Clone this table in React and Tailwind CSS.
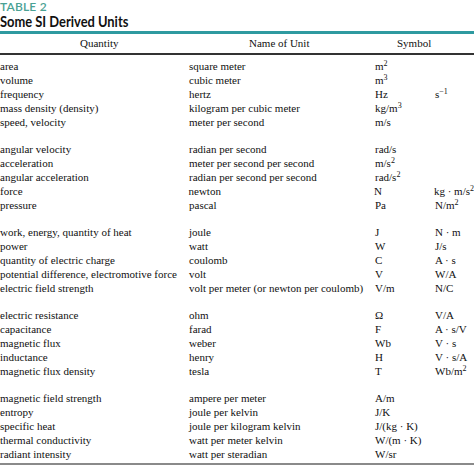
const groups = [
  [
    ["area", "square meter", <>m<sup>2</sup></>, ""],
    ["volume", "cubic meter", <>m<sup>3</sup></>, ""],
    ["frequency", "hertz", "Hz", <>s<sup>−1</sup></>],
    ["mass density (density)", "kilogram per cubic meter", <>kg/m<sup>3</sup></>, ""],
    ["speed, velocity", "meter per second", "m/s", ""],
  ],
  [
    ["angular velocity", "radian per second", "rad/s", ""],
    ["acceleration", "meter per second per second", <>m/s<sup>2</sup></>, ""],
    ["angular acceleration", "radian per second per second", <>rad/s<sup>2</sup></>, ""],
    ["force", "newton", "N", <>kg · m/s<sup>2</sup></>],
    ["pressure", "pascal", "Pa", <>N/m<sup>2</sup></>],
  ],
  [
    ["work, energy, quantity of heat", "joule", "J", "N · m"],
    ["power", "watt", "W", "J/s"],
    ["quantity of electric charge", "coulomb", "C", "A · s"],
    ["potential difference, electromotive force", "volt", "V", "W/A"],
    ["electric field strength", "volt per meter (or newton per coulomb)", "V/m", "N/C"],
  ],
  [
    ["electric resistance", "ohm", "Ω", "V/A"],
    ["capacitance", "farad", "F", "A · s/V"],
    ["magnetic flux", "weber", "Wb", "V · s"],
    ["inductance", "henry", "H", "V · s/A"],
    ["magnetic flux density", "tesla", "T", <>Wb/m<sup>2</sup></>],
  ],
  [
    ["magnetic field strength", "ampere per meter", "A/m", ""],
    ["entropy", "joule per kelvin", "J/K", ""],
    ["specific heat", "joule per kilogram kelvin", "J/(kg · K)", ""],
    ["thermal conductivity", "watt per meter kelvin", "W/(m · K)", ""],
    ["radiant intensity", "watt per steradian", "W/sr", ""],
  ],
];

const Row = ({ r }) => (
  <div className="flex h-[14px] items-center whitespace-nowrap">
    <div className="w-[189px]">{r[0]}</div>
    <div className="w-[186px]">{r[1]}</div>
    <div className="w-[60px]">{r[2]}</div>
    <div>{r[3]}</div>
  </div>
);

export default function App() {
  return (
    <div className="w-[474px] h-[465px] bg-white overflow-hidden text-[#1a1a1a]">
      <div className="[font-family:Lato,sans-serif] text-[#4aa294] font-semibold text-[12px] leading-[13px] tracking-[0.2px]">TABLE 2</div>
      <div className="[font-family:Lato,sans-serif] font-bold text-[15px] leading-[16px] text-[#111] origin-left scale-x-[0.86] whitespace-nowrap">Some SI Derived Units</div>
      <div className="mt-[2px] h-[3px] bg-[#2e9aa0]"></div>
      <div className="[font-family:Liberation_Serif,Times_New_Roman,serif] text-[11px] text-[#111] [&_sup]:text-[8px] [&_sup]:-top-[4px]">
        <div className="flex h-[19px] items-center">
          <div className="w-[189px] pl-[80px]">Quantity</div>
          <div className="w-[186px] pl-[60px]">Name of Unit</div>
          <div className="pl-[22px]">Symbol</div>
        </div>
        <div className="h-[2px] bg-[#333]"></div>
        <div className="pt-[4px] flex flex-col gap-[13px]">
          {groups.map((g, i) => (
            <div key={i}>
              {g.map((r, j) => <Row key={j} r={r} />)}
            </div>
          ))}
        </div>
        <div className="mt-[2px] h-[8px] bg-[#8a8a8a]"></div>
      </div>
    </div>
  );
}
